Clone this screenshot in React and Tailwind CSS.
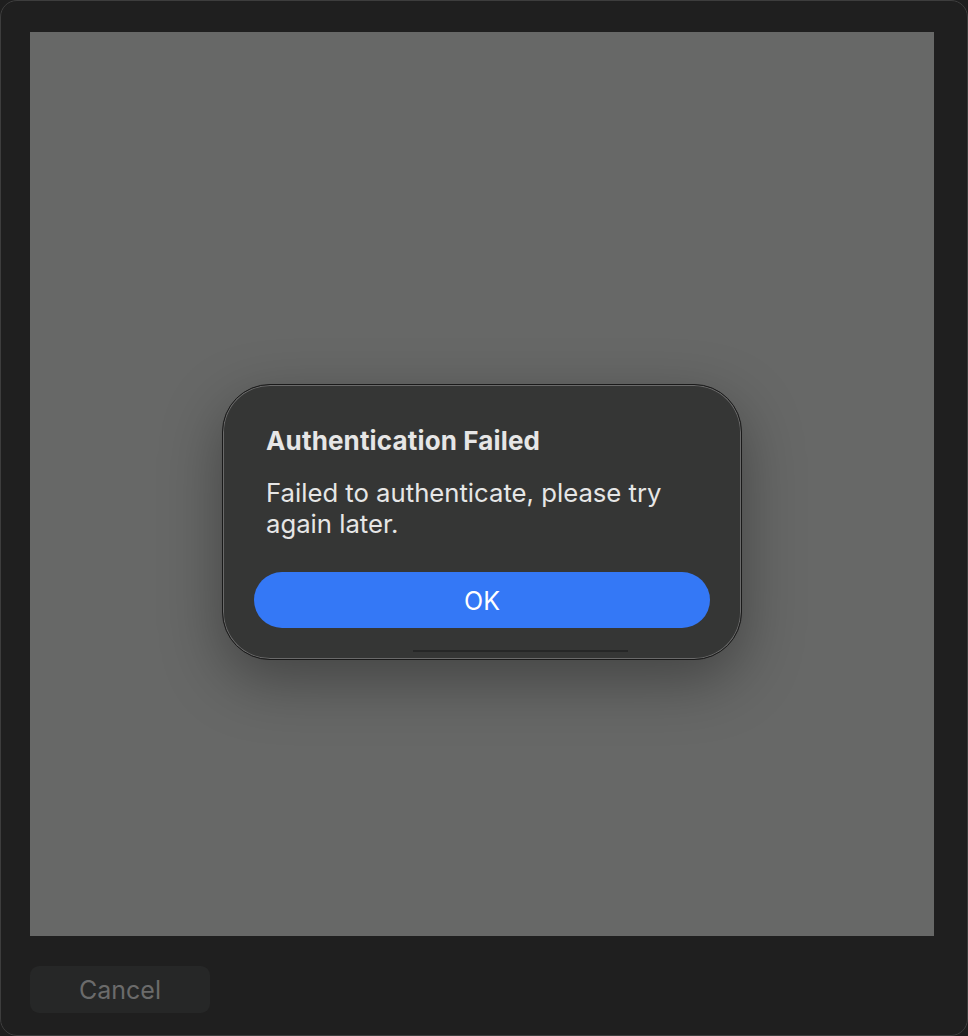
import React from 'react';

const App = () => {
    return (
        <div className="w-full h-[1036px] bg-[#1e1e1e] overflow-hidden" style={{ fontFamily: 'Inter, "Noto Sans", sans-serif' }}>
            {/* Window */}
            <div className="h-full w-full rounded-[17px] border border-[#3d3d3d] bg-[#1f1f1f] flex flex-col pt-[31px] px-[29px]">
                {/* Content panel */}
                <div className="relative h-[904px] w-[904px] bg-[#676867] flex items-center justify-center">
                    {/* Alert */}
                    <div className="relative mt-[76px] w-[520px] h-[276px] rounded-[48px] border border-[#1a1a1a] bg-[#353635] shadow-[0_20px_60px_rgba(0,0,0,0.35)] ring-1 ring-inset ring-[#6a6a6a] px-[31px] pt-[38px]">
                        <h2 className="pl-[12px] text-[26px] leading-[36px] font-bold text-[#e6e6e6] tracking-[0.15px]">
                            Authentication Failed
                        </h2>
                        <p className="pl-[12px] mt-[18px] text-[25.7px] leading-[31px] text-[#e6e6e6]">
                            Failed to authenticate, please try
                            <br />
                            again later.
                        </p>
                        <button className="mt-[33px] w-[456px] h-[56px] rounded-full bg-[#3478f6] text-white text-[25px] pt-[3px]">
                            OK
                        </button>
                        <div className="absolute left-[190px] bottom-[7px] w-[215px] h-[2px] bg-[#262727]"></div>
                    </div>
                </div>

                {/* Footer */}
                <div className="pt-[30px]">
                    <button className="w-[180px] h-[47px] rounded-[9px] bg-[#262727] text-[#6b6b6b] text-[25px] pt-[3px]">
                        Cancel
                    </button>
                </div>
            </div>
        </div>
    );
};

export default App;
